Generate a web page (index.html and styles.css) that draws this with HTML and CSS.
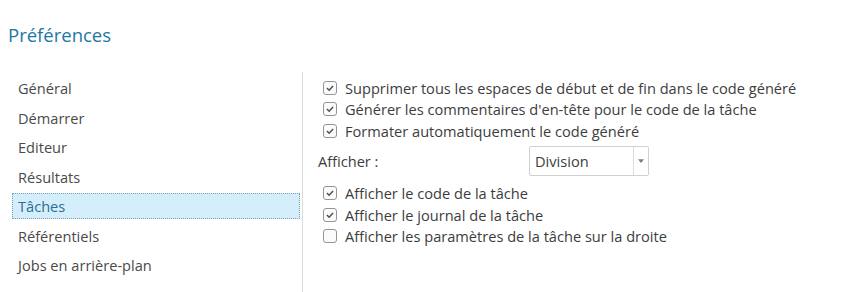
FILE: index.html
```html
<!DOCTYPE html>
<html lang="fr">
<head>
<meta charset="utf-8">
<link rel="stylesheet" href="styles.css">
</head>
<body>
<h1 class="title">Préférences</h1>
<div class="main">
  <nav class="sidebar">
    <div class="item">Général</div>
    <div class="item">Démarrer</div>
    <div class="item">Editeur</div>
    <div class="item">Résultats</div>
    <div class="item selected">Tâches</div>
    <div class="item">Référentiels</div>
    <div class="item">Jobs en arrière-plan</div>
  </nav>
  <section class="panel">
    <div class="group">
      <label class="check"><span class="box on"><svg viewBox="0 0 14 14"><path d="M3.4 7 L6 9.6 L10.6 4.6" /></svg></span>Supprimer tous les espaces de début et de fin dans le code généré</label>
      <label class="check"><span class="box on"><svg viewBox="0 0 14 14"><path d="M3.4 7 L6 9.6 L10.6 4.6" /></svg></span>Générer les commentaires d'en-tête pour le code de la tâche</label>
      <label class="check"><span class="box on"><svg viewBox="0 0 14 14"><path d="M3.4 7 L6 9.6 L10.6 4.6" /></svg></span>Formater automatiquement le code généré</label>
    </div>
    <div class="field">
      <span class="field-label">Afficher :</span>
      <div class="select">
        <span class="select-value">Division</span>
        <span class="select-btn"><svg viewBox="0 0 8 5"><path d="M0 0 H8 L4 5 Z" /></svg></span>
      </div>
    </div>
    <div class="group">
      <label class="check"><span class="box on"><svg viewBox="0 0 14 14"><path d="M3.4 7 L6 9.6 L10.6 4.6" /></svg></span>Afficher le code de la tâche</label>
      <label class="check"><span class="box on"><svg viewBox="0 0 14 14"><path d="M3.4 7 L6 9.6 L10.6 4.6" /></svg></span>Afficher le journal de la tâche</label>
      <label class="check"><span class="box"></span>Afficher les paramètres de la tâche sur la droite</label>
    </div>
  </section>
</div>
</body>
</html>
```

FILE: styles.css
```css
html, body {
  margin: 0;
  padding: 0;
  background: #ffffff;
}
body {
  font-family: "Open Sans", Lato, "Liberation Sans", sans-serif;
  color: #3d3d3d;
  width: 846px;
  height: 292px;
  overflow: hidden;
}
.title {
  margin: 0;
  padding: 22px 0 0 8px;
  height: 50px;
  box-sizing: border-box;
  font-size: 18.5px;
  font-weight: 400;
  color: #1b78a3;
  line-height: 26px;
}
.main {
  display: flex;
  margin-top: 22px;
  height: 220px;
}
.sidebar {
  width: 303px;
  box-sizing: border-box;
  border-right: 1px solid #dcdcdc;
  padding: 3px 2px 0 12px;
  display: flex;
  flex-direction: column;
  gap: 3.5px;
}
.item {
  height: 26px;
  line-height: 26px;
  padding-left: 6px;
  font-size: 14.6px;
  color: #4a4a4a;
  box-sizing: border-box;
}
.item.selected {
  background: #d5eefb;
  border: 1px dotted #7a9fb5;
  padding-left: 5px;
  line-height: 24px;
  color: #2b6f93;
}
.panel {
  padding: 5px 0 0 15px;
  display: flex;
  flex-direction: column;
}
.group {
  display: flex;
  flex-direction: column;
  padding-left: 5px;
}
.check {
  display: flex;
  align-items: center;
  height: 21.5px;
  font-size: 14.6px;
  color: #3d3d3d;
}
.box {
  width: 14px;
  height: 14px;
  box-sizing: border-box;
  border: 1px solid #959595;
  border-radius: 3px;
  background: #fbfbfb;
  margin-right: 8px;
  flex: none;
  display: flex;
}
.box svg {
  width: 12px;
  height: 12px;
}
.box path {
  fill: none;
  stroke: #505050;
  stroke-width: 1.7;
}
.field {
  display: flex;
  align-items: center;
  height: 30px;
  margin: 4px 0 7px;
}
.field-label {
  width: 211px;
  font-size: 14.6px;
  color: #3d3d3d;
}
.select {
  width: 120px;
  height: 30px;
  box-sizing: border-box;
  border: 1px solid #d0d0d0;
  border-radius: 2px;
  display: flex;
  align-items: stretch;
}
.select-value {
  flex: 1;
  padding-left: 5px;
  line-height: 28px;
  font-size: 14.6px;
  color: #3d3d3d;
}
.select-btn {
  width: 14px;
  border-left: 1px solid #dcdcdc;
  display: flex;
  align-items: center;
  justify-content: center;
}
.select-btn svg {
  width: 6px;
  height: 4px;
}
.select-btn path {
  fill: #6f8596;
}
```
